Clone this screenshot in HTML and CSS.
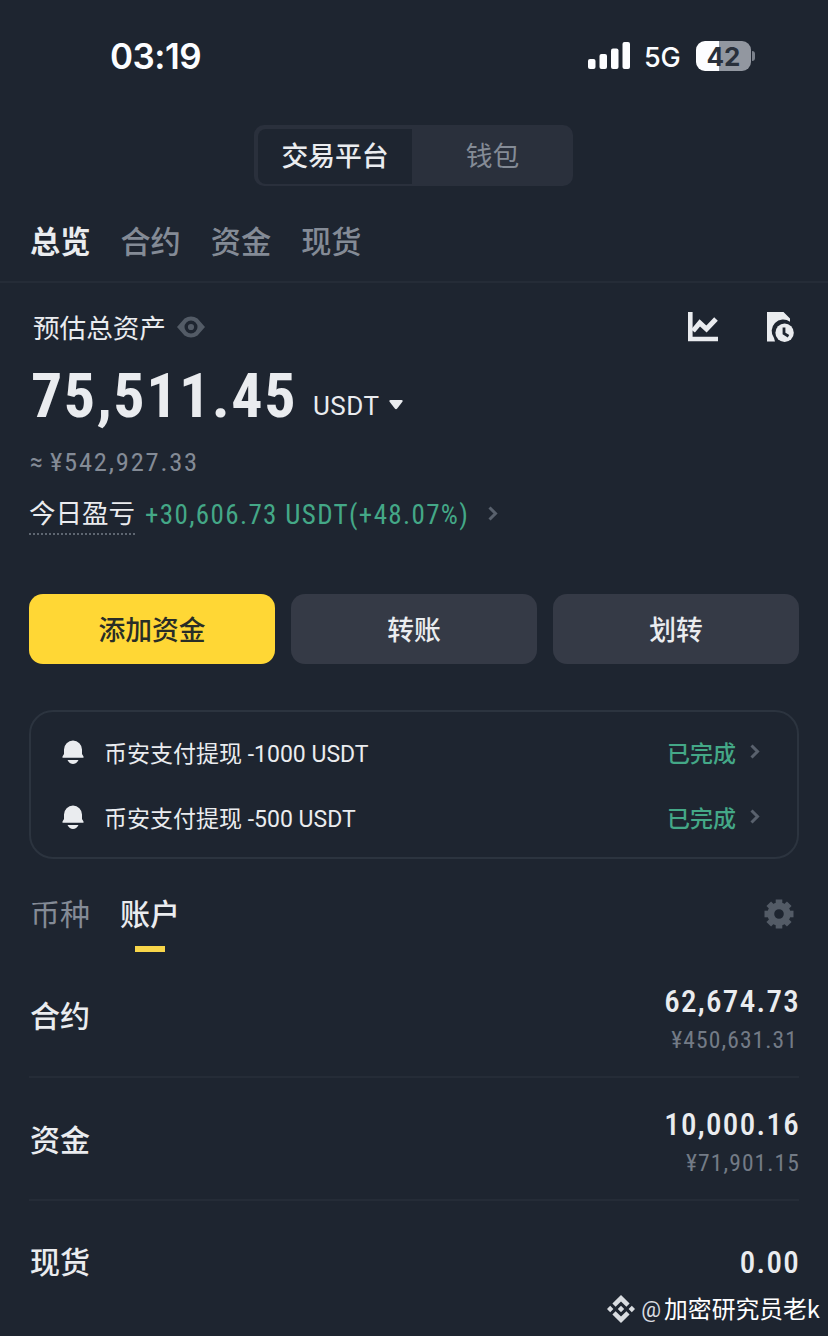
FILE: index.html
```html
<!DOCTYPE html>
<html lang="zh-CN">
<head>
<meta charset="utf-8">
<title>资产总览</title>
<link rel="stylesheet" href="styles.css">
</head>
<body>
<main class="screen">
  <header class="status">
    <span class="clock">03:19</span>
    <div class="status-right">
      <svg class="signal" width="43" height="27" viewBox="0 0 43 27" fill="#fcfdff"><rect x="0" y="17" width="7.500" height="10" rx="2"/><rect x="11.5" y="12" width="7.500" height="15" rx="2"/><rect x="23" y="6.500" width="7.500" height="20.500" rx="2"/><rect x="34.500" y="0" width="7.500" height="27" rx="2"/></svg>
      <span class="network">5G</span>
      <span class="battery">42</span>
      <span class="battery-cap"></span>
    </div>
  </header>

  <nav class="segment">
    <span class="segment-item segment-active">交易平台</span>
    <span class="segment-item segment-idle">钱包</span>
  </nav>

  <nav class="tabs">
    <span class="tab tab-active">总览</span>
    <span class="tab">合约</span>
    <span class="tab">资金</span>
    <span class="tab">现货</span>
  </nav>

  <section class="summary">
    <div class="summary-head">
      <span class="summary-label">预估总资产</span>
      <svg class="eye" width="28" height="22" viewBox="0 0 28 22"><path fill="#535b66" fill-rule="evenodd" d="M0 11 7.500 2.500Q10.500 .5 14 .5t6.500 2L28 11l-7.500 8.500q-3 2-6.500 2t-6.500-2zM14 4.500a6.500 6.500 0 1 0 0 13 6.500 6.500 0 0 0 0-13m0 3.400a3.100 3.100 0 1 1 0 6.200 3.100 3.100 0 0 1 0-6.200"/></svg>
      <svg class="chart" width="30" height="31" viewBox="0 0 30 31" fill="none" stroke="#eaecef"><path stroke-width="4.600" d="M2.300 0v27H30"/><path stroke-width="5" d="m5 19 6.800-8.200 6.700 6.200L28 7"/></svg>
      <svg class="history" width="28" height="31" viewBox="0 0 28 31"><path fill="#eaecef" d="M0 0h16.500L23 6.500v3.300A11.500 11.500 0 0 0 7 26l1 3.500H0z"/><circle cx="17.600" cy="20.800" r="9.200" fill="#eaecef"/><path fill="none" stroke="#1e2530" stroke-width="2.800" d="M17 15.500v6l4.500 2.800"/></svg>
    </div>
    <div class="balance">
      <span class="balance-value">75,511.45</span>
      <span class="balance-unit">USDT</span>
      <svg width="14" height="10" viewBox="0 0 14 10" fill="#eaecef"><path d="M1.500 0h11q2 .3.700 2L8.200 8.500q-1.200 1.300-2.400 0L.8 2Q-.4.3 1.500 0z"/></svg>
    </div>
    <div class="fiat"><span class="approx">≈</span><span>¥542,927.33</span></div>
    <div class="pnl">
      <span class="pnl-label">今日盈亏</span>
      <span class="pnl-value">+30,606.73 USDT(+48.07%)</span>
      <svg class="chevron" width="10" height="15" viewBox="0 0 10 15"><path d="m1.500 1.500 6 6-6 6"/></svg>
    </div>
  </section>

  <div class="actions">
    <button class="action action-primary">添加资金</button>
    <button class="action">转账</button>
    <button class="action">划转</button>
  </div>

  <section class="notices">
    <div class="notice">
      <svg class="bell" width="22" height="24" viewBox="0 0 22 24" fill="#eaecef"><path d="M2 9.500a9 9 0 0 1 18 0V14l1.500 2.500v1.300H.5v-1.300L2 14zM5.500 20h11q-2 4-5.500 4t-5.500-4z"/></svg>
      <span class="notice-text">币安支付提现 <span class="notice-amount">-1000 USDT</span></span>
      <span class="notice-state">已完成</span>
      <svg class="chevron" width="10" height="15" viewBox="0 0 10 15"><path d="m1.500 1.500 6 6-6 6"/></svg>
    </div>
    <div class="notice">
      <svg class="bell" width="22" height="24" viewBox="0 0 22 24" fill="#eaecef"><path d="M2 9.500a9 9 0 0 1 18 0V14l1.500 2.500v1.300H.5v-1.300L2 14zM5.500 20h11q-2 4-5.500 4t-5.500-4z"/></svg>
      <span class="notice-text">币安支付提现 <span class="notice-amount">-500 USDT</span></span>
      <span class="notice-state">已完成</span>
      <svg class="chevron" width="10" height="15" viewBox="0 0 10 15"><path d="m1.500 1.500 6 6-6 6"/></svg>
    </div>
  </section>

  <nav class="list-tabs">
    <span class="list-tab">币种</span>
    <span class="list-tab list-tab-active">账户</span>
    <svg class="gear" width="30" height="30" viewBox="-15 -15 30 30"><g fill="#535b66"><path id="tooth" d="M-3.300-9.500v-5h6.600v5z"/><use href="#tooth" transform="rotate(45)"/><use href="#tooth" transform="rotate(90)"/><use href="#tooth" transform="rotate(135)"/><use href="#tooth" transform="rotate(180)"/><use href="#tooth" transform="rotate(225)"/><use href="#tooth" transform="rotate(270)"/><use href="#tooth" transform="rotate(315)"/></g><circle r="8.200" fill="none" stroke="#535b66" stroke-width="6.800"/></svg>
  </nav>

  <section class="accounts">
    <div class="account">
      <span class="account-name">合约</span>
      <div class="account-values"><span class="account-value">62,674.73</span><span class="account-fiat fiat-inset">¥450,631.31</span></div>
    </div>
    <div class="account">
      <span class="account-name">资金</span>
      <div class="account-values"><span class="account-value">10,000.16</span><span class="account-fiat">¥71,901.15</span></div>
    </div>
    <div class="account account-last">
      <span class="account-name">现货</span>
      <div class="account-values"><span class="account-value">0.00</span></div>
    </div>
  </section>

  <div class="watermark">
    <svg width="28" height="28" viewBox="0 0 28 28" fill="#d9dce0"><path d="m14 0 8.600 8.600-3.200 3.200L14 6.400l-5.400 5.400-3.200-3.200zM14 28l8.600-8.600-3.200-3.200-5.400 5.400-5.400-5.400-3.200 3.200zM3.200 10.800 6.400 14l-3.200 3.200L0 14zM24.800 10.800 28 14l-3.200 3.200-3.200-3.200zM14 10.800l3.200 3.200-3.200 3.200-3.200-3.200z"/></svg>
    <span class="at">@</span><span class="author">加密研究员老k</span>
  </div>
</main>
</body>
</html>
```
FILE: styles.css
```css
* { box-sizing: border-box; }

body {
  margin: 0;
  background: #1e2530;
  color: #eaecef;
  font-family: Roboto, "Noto Sans CJK SC", sans-serif;
}

svg { display: block; flex: none; }

.screen {
  position: relative;
  width: 828px;
  height: 1336px;
  overflow: hidden;
}

.status {
  display: flex;
  justify-content: space-between;
  height: 125px;
  padding: 0 73px 0 110px;
  color: #fcfdff;
  font-family: Inter, sans-serif;
}
.clock { height: 112px; font-size: 35px; font-weight: 600; line-height: 112px; letter-spacing: -.5px; }
.status-right { display: flex; align-items: center; height: 111px; }
.network { margin-left: 13px; width: 38px; font-size: 27px; font-weight: 500; line-height: 36px; padding-top: 4px; letter-spacing: -.1px; }
.battery {
  width: 55px;
  height: 30px;
  margin-left: 14px;
  border-radius: 9px;
  background: linear-gradient(90deg, #fcfdff 42%, #9297a0 42%);
  color: #29303b;
  font-size: 26px;
  font-weight: 700;
  line-height: 31px;
  text-align: center;
}
.battery-cap { width: 3px; height: 10px; margin-left: 1px; border-radius: 0 4px 4px 0; background: #7b818b; }

.segment {
  display: grid;
  grid-template-columns: 154px 1fr;
  width: 319px;
  height: 61px;
  margin-left: 254px;
  padding: 4px;
  border-radius: 10px;
  background: #2a303c;
}
.segment-item { padding-top: 2px; color: #848b96; font-size: 26.8px; line-height: 53px; text-align: center; }
.segment-active { border-radius: 8px 0 0 8px; background: #1e2530; color: #eaecef; font-weight: 500; }
.segment-idle { padding-left: 4px; }

.tabs {
  display: flex;
  gap: 30px;
  height: 97px;
  padding: 36px 30px 0;
  border-bottom: 2px solid #252c37;
}
.tab { color: #848b96; font-size: 30.2px; font-weight: 500; line-height: 42px; }
.tab-active { color: #eaecef; font-weight: 700; }

.summary-head { display: flex; align-items: center; height: 60px; padding: 28px 33px 0 33px; }
.summary-label { padding-top: 3px; font-size: 26.6px; line-height: 32px; }
.eye { margin-left: 11px; }
.chart { margin-left: auto; }
.history { margin-left: 49px; }
.balance { display: flex; align-items: baseline; height: 82px; margin-top: 11px; padding-left: 31px; }
.balance-value { width: 264px; font-size: 62px; font-weight: 700; font-stretch: 75%; line-height: 84px; letter-spacing: 1.5px; }
.balance-unit { position: relative; top: -2px; width: 68px; margin-left: 18px; font-size: 26px; letter-spacing: .5px; }
.balance svg { margin-left: 8px; transform: translateY(-7px); }
.fiat { display: flex; gap: 7px; height: 47px; margin-top: 7px; padding-left: 30px; color: #848b96; font-size: 26.5px; font-stretch: 75%; line-height: 37px; letter-spacing: 1.8px; }
.approx { width: 13px; letter-spacing: 0; }
.pnl { display: flex; align-items: center; height: 46px; margin-top: 2px; padding-left: 29px; }
.pnl-label { border-bottom: 2px dotted #5e6671; font-size: 26.5px; line-height: 38px; }
.pnl-value { width: 324px; margin-left: 10px; color: #44a887; font-size: 27px; font-stretch: 75%; letter-spacing: 1.36px; white-space: nowrap; }
.pnl .chevron { margin: -4px 0 0 19px; }
.chevron { fill: none; stroke: #59616d; stroke-width: 3; }

.actions {
  display: grid;
  grid-template-columns: repeat(3, 1fr);
  gap: 16px;
  height: 70px;
  margin: 56px 29px 0;
}
.action {
  padding: 4px 0 0;
  border: 0;
  border-radius: 14px;
  background: #353a46;
  color: #eaecef;
  font: 500 26.8px/66px Roboto, "Noto Sans CJK SC", sans-serif;
}
.action-primary { background: #ffd735; color: #292d27; }

.notices { height: 149px; margin: 46px 29px 0; padding: 7px 37px 0 31px; border: 2px solid #2c343f; border-radius: 24px; }
.notice { display: flex; align-items: center; height: 65px; }
.notice-text { margin-left: 20px; font-size: 23px; white-space: pre; }
.notice-state { margin-left: auto; color: #44a887; font-size: 23px; font-weight: 500; }
.notice .chevron { margin-left: 14px; }

.list-tabs { display: flex; gap: 30px; height: 95px; padding: 34px 34px 0 30px; }
.list-tab { height: 61px; color: #848b96; font-size: 30px; line-height: 44px; }
.list-tab-active { color: #eaecef; font-weight: 500; }
.list-tab-active::after { content: ""; display: block; width: 30px; height: 6px; margin: 9px auto 0; background: #f8d64a; }
.gear { margin: 6px 0 0 auto; }

.accounts { padding: 0 29px; }
.account { display: flex; align-items: center; justify-content: space-between; height: 123.500px; border-bottom: 2px solid #252c37; }
.account-name { padding: 0 0 1px 1px; font-size: 30px; font-weight: 500; }
.account-values { display: flex; flex-direction: column; align-items: flex-end; padding-top: 8px; }
.account-value { margin-right: -1px; font-size: 31px; font-weight: 500; font-stretch: 75%; line-height: 42px; letter-spacing: 1.3px; }
.account-fiat { margin-right: -1px; color: #737b86; font-size: 23.5px; font-stretch: 75%; line-height: 34px; letter-spacing: 1.1px; }
.fiat-inset { padding-right: 2px; }
.account-last { border: 0; }
.account-last .account-name { padding-bottom: 6px; }
.account-last .account-values { padding-top: 0; }

.watermark { position: absolute; right: 8px; bottom: 9px; display: flex; align-items: center; height: 36px; color: #fff; }
.at { margin-left: 6px; color: #d9dce0; font-size: 22px; }
.author { margin: -2px 0 0 3px; font-family: "Noto Sans CJK SC", sans-serif; font-size: 23.8px; line-height: 36px; }
```
